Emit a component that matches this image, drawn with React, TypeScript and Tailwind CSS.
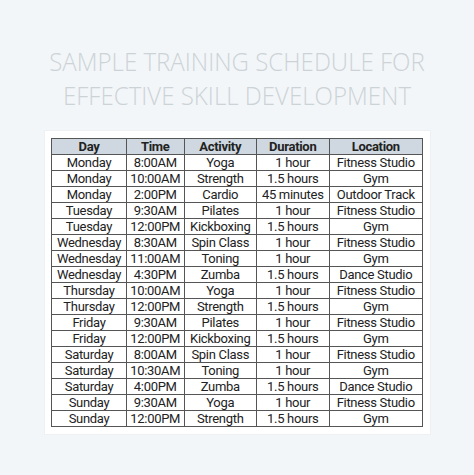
import React from "react";

const rows: [string, string, string, string, string][] = [
  ["Monday", "8:00AM", "Yoga", "1 hour", "Fitness Studio"],
  ["Monday", "10:00AM", "Strength", "1.5 hours", "Gym"],
  ["Monday", "2:00PM", "Cardio", "45 minutes", "Outdoor Track"],
  ["Tuesday", "9:30AM", "Pilates", "1 hour", "Fitness Studio"],
  ["Tuesday", "12:00PM", "Kickboxing", "1.5 hours", "Gym"],
  ["Wednesday", "8:30AM", "Spin Class", "1 hour", "Fitness Studio"],
  ["Wednesday", "11:00AM", "Toning", "1 hour", "Gym"],
  ["Wednesday", "4:30PM", "Zumba", "1.5 hours", "Dance Studio"],
  ["Thursday", "10:00AM", "Yoga", "1 hour", "Fitness Studio"],
  ["Thursday", "12:00PM", "Strength", "1.5 hours", "Gym"],
  ["Friday", "9:30AM", "Pilates", "1 hour", "Fitness Studio"],
  ["Friday", "12:00PM", "Kickboxing", "1.5 hours", "Gym"],
  ["Saturday", "8:00AM", "Spin Class", "1 hour", "Fitness Studio"],
  ["Saturday", "10:30AM", "Toning", "1 hour", "Gym"],
  ["Saturday", "4:00PM", "Zumba", "1.5 hours", "Dance Studio"],
  ["Sunday", "9:30AM", "Yoga", "1 hour", "Fitness Studio"],
  ["Sunday", "12:00PM", "Strength", "1.5 hours", "Gym"],
];

const headers = ["Day", "Time", "Activity", "Duration", "Location"];

export default function App() {
  return (
    <div className="w-[474px] h-[475px] bg-[#f3f6f8] overflow-hidden" style={{ fontFamily: "Roboto, 'Noto Sans', sans-serif" }}>
      <div
        className="pt-[44px] text-center text-[#ccd3d7] text-[26px] leading-[34px] font-light scale-x-[0.925]"
        style={{ fontFamily: "'Open Sans', sans-serif" }}
      >
        <div>SAMPLE TRAINING SCHEDULE FOR</div>
        <div>EFFECTIVE SKILL DEVELOPMENT</div>
      </div>
      <div className="mt-[18px] ml-[44px] w-[387px] h-[305px] bg-white border border-[#eef1f3] pt-[7px] pl-[6px]">
        <table className="border-collapse table-fixed w-[371px] text-[13px] tracking-[-0.3px] text-[#222]">
          <colgroup>
            <col className="w-[75px]" />
            <col className="w-[57.5px]" />
            <col className="w-[72.5px]" />
            <col className="w-[72.5px]" />
            <col className="w-[93.5px]" />
          </colgroup>
          <thead>
            <tr className="h-[16px] bg-[#cfd8e0]">
              {headers.map((h) => (
                <th key={h} className="border border-[#555] p-0 font-bold leading-[15px] text-center">{h}</th>
              ))}
            </tr>
          </thead>
          <tbody>
            {rows.map((r, i) => (
              <tr key={i} className="h-[16px]">
                {r.map((c, j) => (
                  <td key={j} className="border border-[#555] p-0 leading-[15px] text-center whitespace-nowrap overflow-hidden">{c}</td>
                ))}
              </tr>
            ))}
          </tbody>
        </table>
      </div>
    </div>
  );
}
